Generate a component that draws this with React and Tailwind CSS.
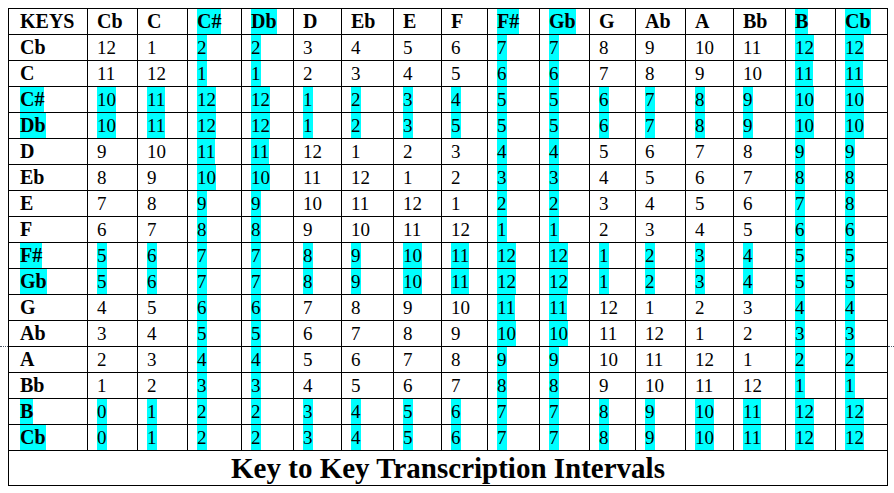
const KEYS = ["Cb", "C", "C#", "Db", "D", "Eb", "E", "F", "F#", "Gb", "G", "Ab", "A", "Bb", "B", "Cb"];
const HOT = [false, false, true, true, false, false, false, false, true, true, false, false, false, false, true, true];
const WIDTHS = [79, 50, 50, 54, 52, 48, 52, 48, 46, 52, 50, 46, 50, 48, 52, 50, 52];

const ROWS = [
  [12, 1, 2, 2, 3, 4, 5, 6, 7, 7, 8, 9, 10, 11, 12, 12],
  [11, 12, 1, 1, 2, 3, 4, 5, 6, 6, 7, 8, 9, 10, 11, 11],
  [10, 11, 12, 12, 1, 2, 3, 4, 5, 5, 6, 7, 8, 9, 10, 10],
  [10, 11, 12, 12, 1, 2, 3, 5, 5, 5, 6, 7, 8, 9, 10, 10],
  [9, 10, 11, 11, 12, 1, 2, 3, 4, 4, 5, 6, 7, 8, 9, 9],
  [8, 9, 10, 10, 11, 12, 1, 2, 3, 3, 4, 5, 6, 7, 8, 8],
  [7, 8, 9, 9, 10, 11, 12, 1, 2, 2, 3, 4, 5, 6, 7, 8],
  [6, 7, 8, 8, 9, 10, 11, 12, 1, 1, 2, 3, 4, 5, 6, 6],
  [5, 6, 7, 7, 8, 9, 10, 11, 12, 12, 1, 2, 3, 4, 5, 5],
  [5, 6, 7, 7, 8, 9, 10, 11, 12, 12, 1, 2, 3, 4, 5, 5],
  [4, 5, 6, 6, 7, 8, 9, 10, 11, 11, 12, 1, 2, 3, 4, 4],
  [3, 4, 5, 5, 6, 7, 8, 9, 10, 10, 11, 12, 1, 2, 3, 3],
  [2, 3, 4, 4, 5, 6, 7, 8, 9, 9, 10, 11, 12, 1, 2, 2],
  [1, 2, 3, 3, 4, 5, 6, 7, 8, 8, 9, 10, 11, 12, 1, 1],
  [0, 1, 2, 2, 3, 4, 5, 6, 7, 7, 8, 9, 10, 11, 12, 12],
  [0, 1, 2, 2, 3, 4, 5, 6, 7, 7, 8, 9, 10, 11, 12, 12],
];

const Mark = ({ on, children }) => (
  <span className={`inline-block align-top leading-[25px] ${on ? "bg-[#00ffff]" : ""}`}>{children}</span>
);

export default function App() {
  return (
    <div
      className="relative w-[894px] h-[493px] bg-white pl-[8px] pt-[8px] text-black"
      style={{ fontFamily: '"Liberation Serif", "Times New Roman", serif' }}
    >
      {/* page break dots */}
      <div className="absolute left-0 top-[346px] w-[8px] border-t border-dotted border-gray-600" />
      <div className="absolute left-[888px] top-[346px] w-[6px] border-t border-dotted border-gray-600" />

      <table className="border-collapse table-fixed w-[879px]">
        <colgroup>
          {WIDTHS.map((w, i) => (
            <col key={i} style={{ width: w }} />
          ))}
        </colgroup>
        <tbody>
          <tr>
            <td className="border border-black p-0 pl-[11px] text-[20px] leading-[25px] font-bold">
              <Mark>KEYS</Mark>
            </td>
            {KEYS.map((k, j) => (
              <td key={j} className="border border-black p-0 pl-[9px] text-[20px] leading-[25px] font-bold">
                <Mark on={HOT[j]}>{k}</Mark>
              </td>
            ))}
          </tr>
          {ROWS.map((row, i) => (
            <tr key={i}>
              <td className="border border-black p-0 pl-[11px] text-[20px] leading-[25px] font-bold">
                <Mark on={HOT[i]}>{KEYS[i]}</Mark>
              </td>
              {row.map((v, j) => (
                <td key={j} className="border border-black p-0 pl-[9px] text-[19px] leading-[25px]">
                  <Mark on={HOT[i] || HOT[j]}>{v}</Mark>
                </td>
              ))}
            </tr>
          ))}
          <tr>
            <td colSpan={17} className="border border-black p-0 h-[35px] text-center text-[29px] font-bold leading-[34px]">
              Key to Key Transcription Intervals
            </td>
          </tr>
        </tbody>
      </table>
    </div>
  );
}
